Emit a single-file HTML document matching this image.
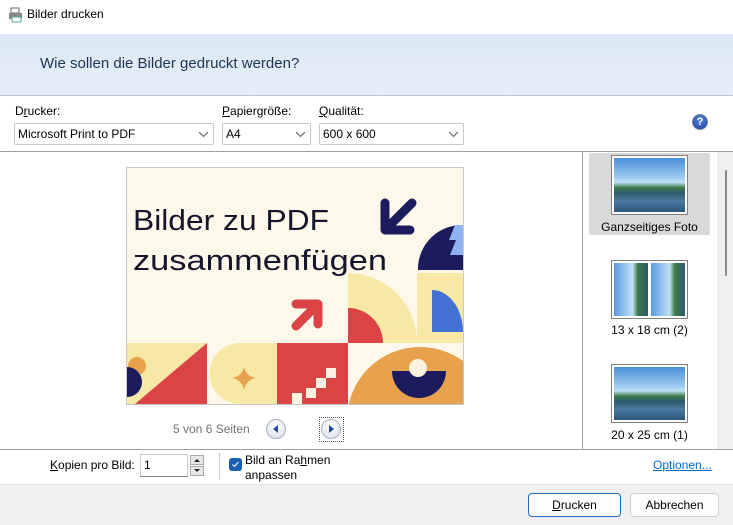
<!DOCTYPE html>
<html><head><meta charset="utf-8"><style>
*{margin:0;padding:0;box-sizing:border-box}
body{width:733px;height:525px;position:relative;overflow:hidden;background:#fff;font-family:"Segoe UI","Liberation Sans",sans-serif;font-size:12px;color:#000}
.a{position:absolute}
.combo{position:absolute;height:22px;border:1px solid #c8c8c8;border-radius:2px;background:#fff;padding:3px 0 0 3px;font-size:12px}
.combo svg{position:absolute;right:5px;top:8px}
.btn{position:absolute;height:24px;border:1px solid #d0d0d0;border-radius:4px;background:#fdfdfd;text-align:center;line-height:22px;font-size:12px}
.nav{position:absolute;width:20px;height:20px;border-radius:50%;background:radial-gradient(circle at 50% 35%,#fff,#d8dde8);border:1px solid #a8b0c0}
.thumb{position:absolute;border:1px solid #808080;background:#fff;padding:2px}
.sky{width:100%;height:100%;background:linear-gradient(180deg,#4a8fd8 0%,#9cc8ee 35%,#bfe0f5 45%,#3e7a48 55%,#2c5a70 65%,#4a7aa0 80%,#2b5578 100%)}
.cap{position:absolute;font-size:12px;text-align:center}
</style></head><body>
<svg class="a" style="left:8px;top:7px" width="16" height="16" viewBox="0 0 16 16"><rect x="3" y="1" width="8" height="5" fill="#fff" stroke="#666"/><rect x="1" y="6" width="13" height="6" fill="#888"/><rect x="4" y="10" width="9" height="5" fill="#fff" stroke="#5a9"/></svg>
<div class="a" style="left:27px;top:7px;font-size:12px">Bilder drucken</div>
<div class="a" style="left:0;top:34px;width:733px;height:62px;background:linear-gradient(#dce8f5,#e6eef8)"></div>
<div class="a" style="left:40px;top:55px;font-size:15px;color:#1d3553">Wie sollen die Bilder gedruckt werden?</div>
<div class="a" style="left:0;top:95px;width:733px;height:1px;background:#b8c4d0"></div>
<div class="a" style="left:15px;top:104px"><span>D<u>r</u>ucker:</span></div>
<div class="a" style="left:222px;top:104px"><u>P</u>apiergröße:</div>
<div class="a" style="left:319px;top:104px"><u>Q</u>ualität:</div>
<div class="combo" style="left:14px;top:123px;width:200px">Microsoft Print to PDF<svg width="9" height="5"><path d="M0 0L4.5 4.5L9 0" fill="none" stroke="#555"/></svg></div>
<div class="combo" style="left:222px;top:123px;width:89px">A4<svg width="9" height="5"><path d="M0 0L4.5 4.5L9 0" fill="none" stroke="#555"/></svg></div>
<div class="combo" style="left:319px;top:123px;width:145px">600 x 600<svg width="9" height="5"><path d="M0 0L4.5 4.5L9 0" fill="none" stroke="#555"/></svg></div>
<div class="a" style="left:692px;top:114px;width:16px;height:16px;border-radius:50%;background:radial-gradient(circle at 50% 35%,#5a8ae0,#1a3a9a);border:1px solid #7a8aa0;color:#fff;font-weight:bold;font-size:11px;text-align:center;line-height:14px">?</div>
<div class="a" style="left:0;top:151px;width:733px;height:1px;background:#a0a0a0"></div>
<div class="a" style="left:582px;top:152px;width:1px;height:297px;background:#a0a0a0"></div>
<div class="a" style="left:717px;top:152px;width:16px;height:297px;background:#f0f0f0"></div>
<div class="a" style="left:725px;top:170px;width:2px;height:106px;background:#8a8a8a;border-radius:1px"></div>
<div class="a" style="left:589px;top:153px;width:121px;height:82px;background:#d9d9d9;border-radius:2px"></div>
<div class="thumb" style="left:611px;top:155px;width:77px;height:60px"><div class="sky"></div></div>
<div class="cap" style="left:589px;top:220px;width:121px">Ganzseitiges Foto</div>
<div class="thumb" style="left:611px;top:260px;width:77px;height:59px;display:flex;gap:3px"><div class="sky" style="width:34px;background:linear-gradient(90deg,#5a9ae0,#bfe0f5 55%,#3e7a48 70%,#2c5a70)"></div><div class="sky" style="width:34px;background:linear-gradient(90deg,#5a9ae0,#bfe0f5 55%,#3e7a48 70%,#2c5a70)"></div></div>
<div class="cap" style="left:589px;top:323px;width:121px">13 x 18 cm (2)</div>
<div class="thumb" style="left:611px;top:364px;width:77px;height:59px"><div class="sky"></div></div>
<div class="cap" style="left:589px;top:428px;width:121px">20 x 25 cm (1)</div>
<svg class="a" style="left:126px;top:167px" width="338" height="238" viewBox="126 167 338 238">
<rect x="126.5" y="167.5" width="337" height="237" fill="#fdf8e9" stroke="#c8c8c8"/>
<text x="133" y="230" font-family="Liberation Sans,sans-serif" font-size="29" fill="#14142b" textLength="196" lengthAdjust="spacingAndGlyphs">Bilder zu PDF</text>
<text x="133" y="270" font-family="Liberation Sans,sans-serif" font-size="29" fill="#14142b" textLength="254" lengthAdjust="spacingAndGlyphs">zusammenfügen</text>
<path d="M385 203L385 230L410 230M386 229L412 203" stroke="#1b1b5e" stroke-width="9" stroke-linecap="round" stroke-linejoin="round" fill="none"/>
<path d="M418 270A44 44 0 0 1 463 225L463 270Z" fill="#1b1b5e"/>
<path d="M455 225L449 240L456 240L450 255L463 255L463 225Z" fill="#8fb3f0"/>
<path d="M348 273A69 70 0 0 1 417 343L348 343Z" fill="#f8e8a6"/>
<path d="M348 308A35 35 0 0 1 383 343L348 343Z" fill="#dc4346"/>
<rect x="417" y="273" width="46" height="70" fill="#f8e8a6"/>
<path d="M432 290A31 42 0 0 1 463 332L432 332Z" fill="#4472d4"/>
<path d="M296 304L318 304L318 324M317 305L296 326" stroke="#dc4346" stroke-width="9" stroke-linecap="round" stroke-linejoin="round" fill="none"/>
<rect x="127" y="343" width="80" height="61" fill="#f8e8a6"/>
<path d="M207 343L207 404L135 404Z" fill="#dc4346"/>
<circle cx="137" cy="366" r="9" fill="#e8a24e"/>
<path d="M127 367A13 13 0 0 1 127 397Z" fill="#1b1b5e"/>
<path d="M240 343L277 343L277 404L240 404A30 30 0 0 1 240 343Z" fill="#f8e8a6"/>
<path d="M244 367Q246 376 256 378Q246 380 244 390Q242 380 232 378Q242 376 244 367Z" fill="#e8a24e"/>
<rect x="277" y="343" width="71" height="61" fill="#dc4346"/>
<rect x="306" y="388" width="10" height="10" fill="#fdf3e0"/><rect x="316" y="378" width="10" height="10" fill="#fdf3e0"/><rect x="326" y="368" width="10" height="10" fill="#fdf3e0"/><rect x="292" y="393" width="10" height="11" fill="#fdf3e0"/>
<rect x="348" y="343" width="115" height="61" fill="#fdf8e9"/>
<circle cx="420" cy="420" r="73" fill="#e8a24e"/>
<path d="M392 371A27 27 0 0 0 446 371Z" fill="#1b1b5e"/>
<circle cx="418" cy="368" r="9" fill="#fdf3e0"/>
<rect x="126.5" y="167.5" width="337" height="237" fill="none" stroke="#c8c8c8"/>
</svg>
<div class="a" style="left:173px;top:422px;color:#707070">5 von 6 Seiten</div>
<div class="nav" style="left:266px;top:419px"><svg width="18" height="18"><path d="M11 5L6 9L11 13Z" fill="#1c4a9c"/></svg></div>
<div class="a" style="left:319px;top:417px;width:25px;height:25px;border:1px dotted #555"></div>
<div class="nav" style="left:321px;top:419px"><svg width="18" height="18"><path d="M7 5L12 9L7 13Z" fill="#1c4a9c"/></svg></div>
<div class="a" style="left:0;top:449px;width:733px;height:1px;background:#a0a0a0"></div>
<div class="a" style="left:50px;top:458px"><u>K</u>opien pro Bild:</div>
<div class="a" style="left:140px;top:454px;width:48px;height:23px;border:1px solid #c8c8c8;border-bottom:1px solid #888;padding:3px 0 0 3px">1</div>
<div class="a" style="left:190px;top:455px;width:14px;height:10px;border:1px solid #aaa;background:#e8e8e8"><svg width="12" height="8" style="display:block"><path d="M3 6L6 3L9 6Z" fill="#222"/></svg></div>
<div class="a" style="left:190px;top:466px;width:14px;height:10px;border:1px solid #aaa;background:#e8e8e8"><svg width="12" height="8" style="display:block"><path d="M3 2L6 5L9 2Z" fill="#222"/></svg></div>
<div class="a" style="left:219px;top:453px;width:1px;height:27px;background:#c8c8c8"></div>
<div class="a" style="left:229px;top:458px;width:13px;height:13px;border-radius:3px;background:#1a5fb4"><svg width="13" height="13"><path d="M3.5 6.5L5.5 8.5L9.5 4" stroke="#fff" fill="none"/></svg></div>
<div class="a" style="left:245px;top:453px;line-height:15px">Bild an Ra<u>h</u>men<br>anpassen</div>
<div class="a" style="left:653px;top:458px;color:#0066cc;text-decoration:underline">Optionen...</div>
<div class="a" style="left:0;top:484px;width:733px;height:41px;background:#f0f0f0;border-top:1px solid #e2e2e2"></div>
<div class="btn" style="left:528px;top:493px;width:93px;border-color:#1a6fc4"><u>D</u>rucken</div>
<div class="btn" style="left:630px;top:493px;width:89px">Abbrechen</div>
</body></html>
